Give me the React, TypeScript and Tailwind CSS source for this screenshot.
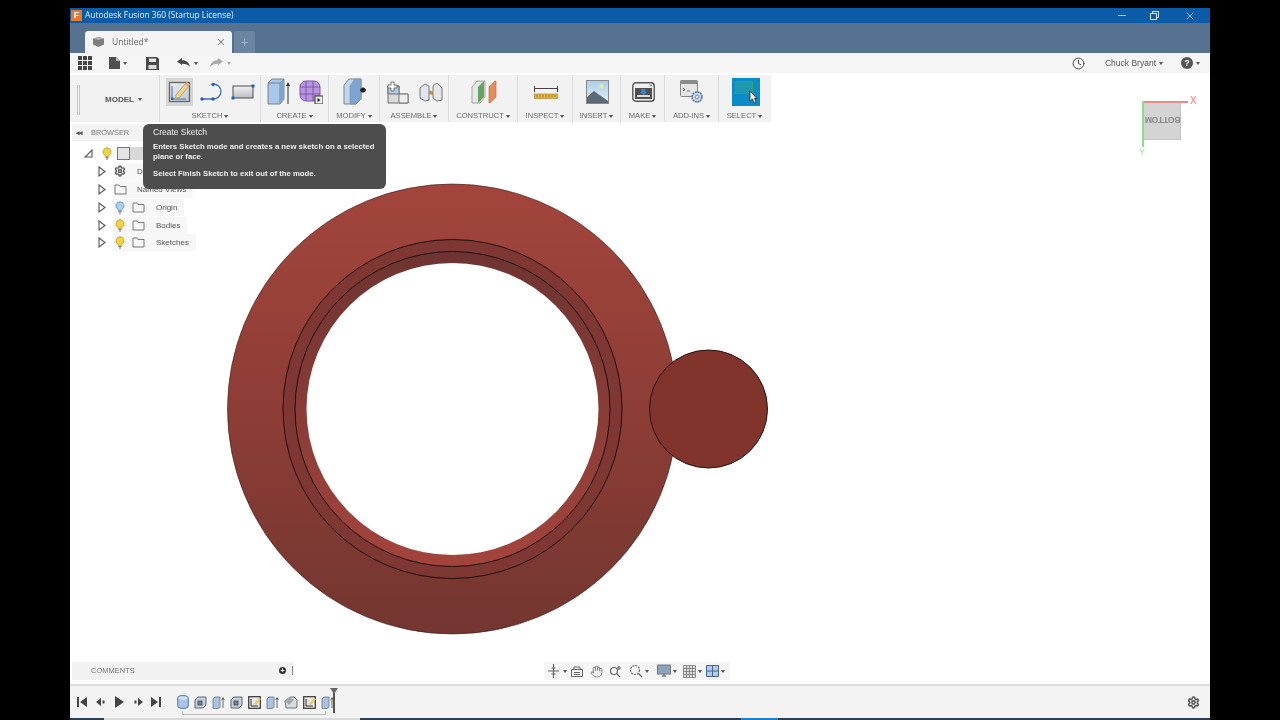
import { Clock, Hand, Settings, X } from "lucide-react";
import type { ReactNode } from "react";

const sans = "font-['Liberation_Sans',Arial,sans-serif]";

function Caret({ className = "" }: { className?: string }) {
  return <span className={`inline-block h-0 w-0 border-x-[2.5px] border-t-[3px] border-x-transparent border-t-[#555] ${className}`} />;
}

function Bulb({ color = "#f5d33f", rim = "#b89a20" }: { color?: string; rim?: string }) {
  return (
    <svg width="10" height="13" viewBox="0 0 10 13">
      <path d="M5 .8a4 4 0 0 0-2.400 7.200c.5.4.7 1 .8 1.600h3.200c.1-.6.3-1.200.8-1.600A4 4 0 0 0 5 .8z" fill={color} stroke={rim} strokeWidth=".8" />
      <path d="M3.500 10.600h3M4 12h2" stroke="#777" strokeWidth="1" />
    </svg>
  );
}

function Folder() {
  return (
    <svg width="13" height="11" viewBox="0 0 13 11" fill="#f7f7f7" stroke="#777" strokeWidth="1">
      <path d="M1 2.500V10h11V2.500H6L5 1H1z" />
    </svg>
  );
}

function Tri() {
  return (
    <svg width="8" height="11" viewBox="0 0 8 11">
      <path d="M1 1l6 4.500L1 10z" fill="#fff" stroke="#555" strokeWidth="1.100" />
    </svg>
  );
}

function SketchIcon() {
  return (
    <svg width="24" height="24" viewBox="0 0 24 24">
      <defs>
        <linearGradient id="sk" x1="0" x2="1" y1="0" y2="1">
          <stop offset="0" stopColor="#eceef0" />
          <stop offset="1" stopColor="#bfc5cb" />
        </linearGradient>
      </defs>
      <rect x="1.500" y="2.500" width="20" height="19" fill="url(#sk)" stroke="#62666b" strokeWidth="1.300" />
      <path d="M4 6v13h14" fill="none" stroke="#3b6fb5" strokeWidth="1" />
      <rect x="3" y="17.500" width="2.500" height="2.500" fill="#2a62b8" />
      <path d="M8 15l9-11 3.500 2.500-9 11-4 1z" fill="#ecd48a" stroke="#a8955a" strokeWidth=".7" />
      <path d="M17 4l1.500-2 3.500 2.500-1.500 2z" fill="#e3a788" />
    </svg>
  );
}

function SplineIcon() {
  return (
    <svg width="24" height="20" viewBox="0 0 24 20">
      <path d="M2 17h11c4 0 8-3 8-7.500S17 2 13 2" fill="none" stroke="#3c6db0" strokeWidth="1.300" />
      <g fill="#1f5fbf">
        <circle cx="2" cy="17" r="1.700" />
        <circle cx="13" cy="17" r="1.700" />
        <circle cx="13" cy="2.500" r="1.700" />
      </g>
    </svg>
  );
}

function RectIcon() {
  return (
    <svg width="24" height="16" viewBox="0 0 24 16">
      <defs>
        <linearGradient id="rg" x1="0" x2="0" y1="0" y2="1">
          <stop offset="0" stopColor="#f2f2f2" />
          <stop offset="1" stopColor="#bbbcbe" />
        </linearGradient>
      </defs>
      <rect x="2" y="2" width="20" height="12" fill="url(#rg)" stroke="#4a4d52" strokeWidth="1" />
      <rect x=".5" y="12.500" width="3" height="3" fill="#1f5fbf" />
      <rect x="20.500" y=".5" width="3" height="3" fill="#1f5fbf" />
    </svg>
  );
}

function ExtrudeIcon() {
  return (
    <svg width="24" height="27" viewBox="0 0 24 27">
      <path d="M1 5l4-4h12v20l-4 5H1z" fill="#a9c8e8" stroke="#6d7a88" strokeWidth=".9" />
      <path d="M13 5h-12M13 5l4-4M13 5v21" fill="none" stroke="#6d7a88" strokeWidth=".9" />
      <path d="M13 5l4-4v20l-4 5z" fill="#7fa3cc" />
      <path d="M21 26V6" stroke="#333" strokeWidth="1" />
      <path d="M19 8l2-4 2 4z" fill="#333" />
    </svg>
  );
}

function FormIcon() {
  return (
    <svg width="24" height="24" viewBox="0 0 24 24">
      <rect x="1" y="1" width="20" height="20" rx="6" fill="#b994dd" stroke="#7b5aa8" />
      <path d="M7 1v20M14 1v20M1 7h20M1 14h20" stroke="#6f4aa4" strokeWidth=".8" />
      <rect x="16" y="16" width="8" height="8" fill="#eee" stroke="#333" />
      <path d="M18.500 18v4l3-2z" fill="#222" />
    </svg>
  );
}

function ModifyIcon() {
  return (
    <svg width="24" height="27" viewBox="0 0 24 27">
      <path d="M1 7l5-6h12v20l-5 5H1z" fill="#c1d6ee" stroke="#7a8794" />
      <path d="M7 8l5-7h6v20l-5 5H7z" fill="#7ea4d2" stroke="#7a8794" strokeWidth=".6" />
      <path d="M17 12h6" stroke="#222" strokeWidth="1.300" />
      <circle cx="20" cy="12" r="2.600" fill="#222" />
    </svg>
  );
}

function AssembleAIcon() {
  return (
    <svg width="24" height="24" viewBox="0 0 24 24">
      <path d="M2 6h11v8h9v9H2z" fill="#d9d9d9" stroke="#6f6f6f" />
      <path d="M2 6h11v8H2z" fill="#b3cbe6" stroke="#6f6f6f" />
      <path d="M5 2h3v3h3v3H8v3H5V8H2V5h3z" fill="#fff" stroke="#555" strokeWidth=".8" />
      <path d="M13 14h9v9h-9z" fill="#ececec" stroke="#777" />
    </svg>
  );
}

function AssembleBIcon() {
  return (
    <svg width="24" height="20" viewBox="0 0 24 20">
      <path d="M1 16V6l5-4 4 2v14l-4 1z" fill="#dfe6ef" stroke="#777" />
      <path d="M14 4l4-3 5 5v12l-5 1-4-3z" fill="#e6e6e6" stroke="#777" />
      <path d="M10 8l4 2v3l-4-1z" fill="#b58f52" />
    </svg>
  );
}

function ConstructIcon() {
  return (
    <svg width="26" height="24" viewBox="0 0 26 24">
      <path d="M1 7l5-6h8v16l-5 6H1z" fill="#e8e8e8" stroke="#888" strokeWidth=".7" />
      <path d="M7 7l6-6v16l-6 6z" fill="#63a45f" />
      <path d="M18 7l6-6h1v16l-6 6h-1z" fill="#e98b55" stroke="#b76a3d" strokeWidth=".6" />
    </svg>
  );
}

function InspectIcon() {
  return (
    <svg width="24" height="14" viewBox="0 0 24 14">
      <path d="M.5 1v6M23.500 1v6M1 3.500h22" stroke="#444" strokeWidth="1" />
      <rect x=".5" y="9" width="23" height="4.500" fill="#e6b13e" stroke="#9a7a2b" strokeWidth=".6" />
      <path d="M3 10v2M6 10v2M9 10v2M12 10v2M15 10v2M18 10v2M21 10v2" stroke="#8b6b1e" strokeWidth=".7" />
    </svg>
  );
}

function InsertIcon() {
  return (
    <svg width="23" height="24" viewBox="0 0 23 24">
      <defs>
        <linearGradient id="sky" x1="0" x2="0" y1="0" y2="1">
          <stop offset="0" stopColor="#a9cfe6" />
          <stop offset="1" stopColor="#e6eef2" />
        </linearGradient>
      </defs>
      <rect x=".5" y=".5" width="22" height="23" fill="url(#sky)" stroke="#888" />
      <circle cx="15.500" cy="6" r="2" fill="#f3e6a5" />
      <path d="M1 23V17l7-6 4 3 3 2 7 5v2z" fill="#5c6a78" />
    </svg>
  );
}

function MakeIcon() {
  return (
    <svg width="23" height="20" viewBox="0 0 23 20">
      <rect x=".8" y=".8" width="21.400" height="18.400" rx="3" fill="#f0f0f0" stroke="#555" strokeWidth="1.400" />
      <rect x="3" y="6" width="17" height="11" fill="#4f4f4f" />
      <rect x="5" y="13" width="13" height="2" fill="#ddd" />
      <path d="M9.500 7h4v3h2l-4 3-4-3h2z" fill="#3a86c8" />
      <circle cx="19" cy="3.500" r=".9" fill="#3aa655" />
    </svg>
  );
}

function AddinsIcon() {
  return (
    <svg width="24" height="24" viewBox="0 0 24 24">
      <rect x=".5" y=".5" width="17" height="16" rx="1" fill="#e4e4e4" stroke="#888" />
      <rect x=".5" y=".5" width="17" height="3.500" fill="#8b8b8b" />
      <path d="M3 8l2 1.500L3 11M7 11h3" fill="none" stroke="#555" strokeWidth=".8" />
      <circle cx="17" cy="17" r="5" fill="#c4d6ee" stroke="#4f6f9f" strokeWidth="1.400" strokeDasharray="2 .6" />
      <circle cx="17" cy="17" r="1.800" fill="#fff" stroke="#4f6f9f" strokeWidth=".7" />
    </svg>
  );
}

function SelectIcon() {
  return (
    <div className="relative ml-[1px] h-[28px] w-[28px] bg-[#0a8bca]">
      <div className="ml-[3px] mt-[3px] h-[13px] w-[18px] border border-[#35a35c] bg-[#1f97b0]" />
      <svg width="9" height="14" viewBox="0 0 9 14" className="absolute bottom-[2px] right-[2px]">
        <path d="M1 1v10l2.500-2 1.500 4 2-1-1.500-3.500H8z" fill="#fff" stroke="#222" strokeWidth=".8" />
      </svg>
    </div>
  );
}

function Group({ label, width, children, last }: { label: string; width: number; children: ReactNode; last?: boolean }) {
  return (
    <div
      className={`flex h-full flex-col items-center border-[#dcdcdc] ${last ? "" : "border-r"}`}
      style={{ width }}
    >
      <div className="flex h-[33px] items-center justify-center pl-[1px]">{children}</div>
      <div className={`${sans} mt-[3px] flex items-center gap-[2px] text-[7.600px] leading-[10px] text-[#6a6a6a]`}>
        {label}
        <Caret />
      </div>
    </div>
  );
}

function BrowserRow({ bulb, icon, label }: { bulb?: ReactNode; icon: ReactNode; label: string }) {
  return (
    <div className="flex h-[18px] items-center pl-[26px]">
      <Tri />
      <div className="ml-[7px] flex h-[17px] items-center bg-[#f7f7f7] pr-[7px]">
        {bulb && <div className="flex w-[14px] justify-center">{bulb}</div>}
        <div className={`flex w-[14px] justify-center ${bulb ? "ml-[4px]" : ""}`}>{icon}</div>
        <span className={`${sans} whitespace-nowrap pt-[1px] text-[8px] text-[#555] ${bulb ? "ml-[11px]" : "ml-[10px]"}`}>{label}</span>
      </div>
    </div>
  );
}

function Feature({ kind }: { kind: string }) {
  if (kind === "sketch") {
    return (
      <svg width="13" height="13" viewBox="0 0 13 13">
        <rect x=".7" y=".7" width="11.600" height="11.600" fill="#e8e8e8" stroke="#333" strokeWidth="1.200" />
        <path d="M3 3v7h7" fill="none" stroke="#333" />
        <path d="M6 8l5-6 2 1-5 6z" fill="#edc84a" />
      </svg>
    );
  }
  if (kind === "ext") {
    return (
      <svg width="13" height="13" viewBox="0 0 13 13">
        <path d="M1 3l2-2h5v10l-2 1.500H1z" fill="#a9c4e2" stroke="#69727d" strokeWidth=".8" />
        <path d="M11 12V3M9.800 4L11 1.500 12.200 4" fill="none" stroke="#444" strokeWidth=".8" />
      </svg>
    );
  }
  if (kind === "hole") {
    return (
      <svg width="13" height="13" viewBox="0 0 13 13">
        <path d="M1 4l3-3h8v8l-3 3H1z" fill="#c6cfd9" stroke="#5f6872" />
        <rect x="4" y="5" width="4" height="4" fill="#6d89aa" stroke="#333" strokeWidth=".7" />
      </svg>
    );
  }
  if (kind === "chamfer") {
    return (
      <svg width="14" height="13" viewBox="0 0 14 13">
        <path d="M1 5l5-4h4l3 3v7l-1 1H2z" fill="#d8dde3" stroke="#6b7178" />
        <path d="M1 5l5-4 4 3-5 5z" fill="#a4a8ad" />
      </svg>
    );
  }
  return (
    <svg width="12" height="14" viewBox="0 0 12 14">
      <rect x=".7" y=".7" width="10.600" height="12.600" rx="3" fill="#a8c5e8" stroke="#4f76ad" />
      <ellipse cx="6" cy="3" rx="4.500" ry="1.800" fill="#cfe0f3" />
    </svg>
  );
}

function TimelineControl({ d }: { d: string }) {
  return (
    <svg width="12" height="12" viewBox="0 0 12 12" fill="#444">
      <path d={d} />
    </svg>
  );
}

export default function App() {
  return (
    <div className="relative h-[720px] w-[1280px] overflow-hidden bg-black pt-[8px] blur-[0.35px]">
      <div className={`${sans} ml-[70px] flex h-[710px] w-[1140px] flex-col bg-white`}>
        {/* title bar */}
        <div className="flex h-[15px] items-center bg-[#0a5ca8]">
          <div className="ml-[1px] flex h-[11px] w-[11px] items-center justify-center bg-[#e8792c] text-[9px] font-bold leading-none text-white">F</div>
          <span className="ml-[3px] font-['Open_Sans',sans-serif] text-[8.400px] leading-none text-[#e8f0f8]">Autodesk Fusion 360 (Startup License)</span>
          <div className="ml-auto mr-[14px] flex items-center gap-[24px] text-[#cfe0f0]">
            <div className="h-px w-[8px] bg-[#a9c8e6]" />
            <svg width="9" height="9" viewBox="0 0 9 9" fill="none" stroke="#dbe8f4" strokeWidth="1">
              <path d="M.5 2.500h6v6h-6zM2.500 2.500v-2h6v6h-2" />
            </svg>
            <X size={12} strokeWidth={1.400} className="ml-[1px]" />
          </div>
        </div>

        {/* tab bar */}
        <div className="flex h-[30px] items-end bg-[#567290] pl-[15px]">
          <div className="flex h-[22px] w-[147px] items-center rounded-t-[3px] bg-[#f4f4f4] pl-[7px] pr-[6px]">
            <svg width="13" height="12" viewBox="0 0 13 12">
              <path d="M1 2.500L6.500 1 12 2.500v6L6.500 11 1 8.500z" fill="#7f7f7f" />
              <path d="M6.500 4L1 2.500 6.500 1 12 2.500z" fill="#b0b0b0" />
            </svg>
            <span className="ml-[7px] font-['Open_Sans',sans-serif] text-[8.500px] text-[#666]">Untitled*</span>
            <X size={10} strokeWidth={2.500} className="ml-auto text-[#7a7a7a]" />
          </div>
          <div className="ml-[2px] flex h-[22px] w-[21px] items-center justify-center rounded-t-[2px] bg-[#6a84a1] text-[14px] leading-none text-[#9db1c6]">+</div>
        </div>

        {/* quick access */}
        <div className="flex h-[20px] items-center bg-[#f5f5f5] pl-[8px] pr-[10px]">
          <svg width="14" height="14" viewBox="0 0 14 14" fill="#454545">
            <path d="M0 0h4v4H0zM5 0h4v4H5zM10 0h4v4h-4zM0 5h4v4H0zM5 5h4v4H5zM10 5h4v4h-4zM0 10h4v4H0zM5 10h4v4H5zM10 10h4v4h-4z" />
          </svg>
          <svg width="11" height="12" viewBox="0 0 11 12" fill="#4f4f4f" className="ml-[17px]">
            <path d="M0 0h7l4 4v8H0z" />
            <path d="M7 0v4h4z" fill="#bdbdbd" />
          </svg>
          <Caret className="ml-[3px]" />
          <svg width="13" height="13" viewBox="0 0 13 13" className="ml-[19px]">
            <path d="M0 0h11l2 2v11H0z" fill="#4a4a4a" />
            <path d="M3 1.500h7v3.500H3z" fill="#e8e8e8" />
            <path d="M2.500 8h8v4h-8z" fill="#dcdcdc" />
          </svg>
          <svg width="13" height="10" viewBox="0 0 13 10" fill="#454545" className="ml-[18px]">
            <path d="M0 3.500L5 0v2.300c4 0 7 1.700 8 6.700-1.600-2.500-4-3.300-8-3.300V7z" />
          </svg>
          <Caret className="ml-[4px]" />
          <svg width="13" height="10" viewBox="0 0 13 10" fill="#a9a9a9" className="ml-[12px]">
            <path d="M13 3.500L8 0v2.300C4 2.300 1 4 0 9c1.600-2.500 4-3.300 8-3.300V7z" />
          </svg>
          <Caret className="ml-[4px] opacity-50" />
          <Clock size={13} strokeWidth={1.800} className="ml-auto text-[#444]" />
          <span className="ml-[20px] text-[8.500px] text-[#555]">Chuck Bryant</span>
          <Caret className="ml-[3px]" />
          <div className="ml-[18px] flex h-[12px] w-[12px] items-center justify-center rounded-full bg-[#555] text-[9px] font-bold leading-none text-white">?</div>
          <Caret className="ml-[3px]" />
        </div>

        {/* canvas */}
        <div className="relative flex flex-1 flex-col pt-[2px]">
          <svg className="absolute left-0 top-0" width="1140" height="611" viewBox="0 0 1140 611">
            <defs>
              <linearGradient id="outer" x1="0" x2="0" y1="0" y2="1">
                <stop offset="0" stopColor="#a2453c" />
                <stop offset="0.5" stopColor="#8d3d36" />
                <stop offset="1" stopColor="#733630" />
              </linearGradient>
              <linearGradient id="inner" x1="0" x2="0" y1="0" y2="1">
                <stop offset="0" stopColor="#6e3431" />
                <stop offset="1" stopColor="#a3443c" />
              </linearGradient>
            </defs>
            <circle cx="382.500" cy="336" r="225" fill="url(#outer)" stroke="#3a1a18" strokeWidth=".6" />
            <circle cx="382.500" cy="336" r="169.500" fill="#7f3733" stroke="#200c0c" strokeWidth="1" />
            <circle cx="382.500" cy="336" r="157.500" fill="url(#inner)" stroke="#200c0c" strokeWidth="1" />
            <circle cx="382.500" cy="336" r="146" fill="#fff" />
            <circle cx="638.500" cy="336" r="59" fill="#80342c" stroke="#2a1210" strokeWidth="1" />
          </svg>

          {/* toolbar */}
          <div className="relative flex h-[47px] w-[701px] bg-[#f2f2f2]">
            <div className="flex h-full w-[90px] items-center border-r border-[#dcdcdc] pt-[2px]">
              <div className="ml-[7px] h-[30px] w-[3px] border-x border-[#c8c8c8]" />
              <span className="ml-[25px] text-[8px] font-bold text-[#555]">MODEL</span>
              <Caret className="ml-[4px]" />
            </div>
            <Group label="SKETCH" width={101}>
              <div className="flex items-center gap-[7px]">
                <div className="flex h-[28px] w-[27px] items-center justify-center bg-[#d6d6d6]"><SketchIcon /></div>
                <SplineIcon />
                <RectIcon />
              </div>
            </Group>
            <Group label="CREATE" width={68}>
              <div className="flex items-center gap-[8px]">
                <ExtrudeIcon />
                <FormIcon />
              </div>
            </Group>
            <Group label="MODIFY" width={51}><ModifyIcon /></Group>
            <Group label="ASSEMBLE" width={69}>
              <div className="flex items-center gap-[9px]">
                <AssembleAIcon />
                <AssembleBIcon />
              </div>
            </Group>
            <Group label="CONSTRUCT" width={69}><ConstructIcon /></Group>
            <Group label="INSPECT" width={55}><InspectIcon /></Group>
            <Group label="INSERT" width={48}><InsertIcon /></Group>
            <Group label="MAKE" width={44}><MakeIcon /></Group>
            <Group label="ADD-INS" width={54}><AddinsIcon /></Group>
            <Group label="SELECT" width={51} last><SelectIcon /></Group>
          </div>

          {/* browser */}
          <div className="relative ml-[2px] mt-[2px] w-[200px]">
            <div className="flex h-[17px] w-[120px] items-center bg-[#f2f2f2] pl-[4px]">
              <span className="text-[7px] font-bold leading-none tracking-[-1px] text-[#555]">◂◂</span>
              <span className="ml-[9px] text-[7.400px] text-[#777]">BROWSER</span>
            </div>
            <div className="mt-[3px]">
              <div className="flex h-[18px] items-center pl-[12px]">
                <svg width="9" height="9" viewBox="0 0 9 9">
                  <path d="M8 1v7H1z" fill="#fff" stroke="#555" strokeWidth="1.100" />
                </svg>
                <div className="ml-[6px] flex w-[16px] justify-center"><Bulb /></div>
                <div className="ml-[2px] h-[13px] w-[13px] border border-[#777] bg-[#e4e4e4]" />
                <div className="h-[13px] w-[16px] bg-[#d8d8d8]" />
              </div>
              <BrowserRow icon={<Settings size={12} strokeWidth={2.800} className="text-[#555]" />} label="Document Settings" />
              <BrowserRow icon={<Folder />} label="Named Views" />
              <BrowserRow bulb={<Bulb color="#a9cff2" rim="#5a89b8" />} icon={<Folder />} label="Origin" />
              <BrowserRow bulb={<Bulb />} icon={<Folder />} label="Bodies" />
              <div className="-mt-[1px]">
                <BrowserRow bulb={<Bulb />} icon={<Folder />} label="Sketches" />
              </div>
            </div>
          </div>

          {/* comments and navigation */}
          <div className="relative mb-[4px] mt-auto flex h-[18px] pl-[2px]">
            <div className="flex w-[222px] items-center bg-[#f2f2f2] pb-[1px] pl-[19px]">
              <span className="text-[7.500px] text-[#777]">COMMENTS</span>
              <div className="ml-auto flex h-[7px] w-[7px] items-center justify-center rounded-full bg-[#333] text-[7px] font-bold leading-none text-white">+</div>
              <div className="ml-[6px] mr-[1px] h-[9px] w-px bg-[#888]" />
            </div>
            <div className="ml-[250px] flex w-[186px] items-center bg-[#f5f5f5] pl-[3px] text-[#555]">
              <svg width="13" height="14" viewBox="0 0 13 14" fill="none" stroke="#666" strokeWidth="1.200">
                <path d="M6.500 0v14M1 7h11M4.500 4h4M4.500 10h4" />
              </svg>
              <Caret className="ml-[3px]" />
              <svg width="12" height="11" viewBox="0 0 12 11" fill="none" stroke="#666" className="ml-[4px]">
                <path d="M.5 3.500h11v7H.5zM3 3.500V1h6v2.500M3 6.500h6M3 8.500h6" />
              </svg>
              <Hand size={13} strokeWidth={1.500} className="ml-[7px] text-[#666]" />
              <svg width="13" height="13" viewBox="0 0 13 13" fill="none" stroke="#666" strokeWidth="1.200" className="ml-[6px]">
                <circle cx="5" cy="6" r="3.500" />
                <path d="M8 9l3 3M10 1v4M8 3h4" />
              </svg>
              <svg width="14" height="14" viewBox="0 0 14 14" fill="none" stroke="#666" strokeWidth="1.200" className="ml-[7px]">
                <circle cx="6" cy="6" r="4.500" strokeDasharray="2 1" />
                <path d="M9.500 9.500l3.500 3.500" />
              </svg>
              <Caret className="ml-[2px]" />
              <svg width="14" height="14" viewBox="0 0 14 14" className="ml-[8px]">
                <rect x=".5" y="1" width="13" height="9" fill="#8ba3bf" stroke="#777" />
                <path d="M5 12h4M7 10v2" stroke="#777" strokeWidth="1.500" />
              </svg>
              <Caret className="ml-[2px]" />
              <svg width="13" height="13" viewBox="0 0 13 13" fill="#ddd" stroke="#777" strokeWidth=".8" className="ml-[6px]">
                <path d="M.5.5h12v12H.5zM.5 3.500h12M.5 6.500h12M.5 9.500h12M3.500.5v12M6.500.5v12M9.500.5v12" />
              </svg>
              <Caret className="ml-[2px]" />
              <svg width="13" height="12" viewBox="0 0 13 12" fill="#b4cbe8" stroke="#47668f" className="ml-[4px]">
                <path d="M.5.5h12v11H.5zM6.500.5v11M.5 6h12" />
              </svg>
              <Caret className="ml-[2px]" />
            </div>
          </div>
        </div>

        {/* timeline */}
        <div className="flex h-[34px] items-center border-t-2 border-[#dedede] bg-[#f3f3f3] pl-[6px] pr-[10px]">
          <div className="flex items-center gap-[6.500px]">
            <TimelineControl d="M1 1h2v10H1zM11 1v10L4 6z" />
            <TimelineControl d="M6 2v8L1 6zM7.500 4.500h2v3h-2z" />
            <TimelineControl d="M2 0l9 6-9 6z" />
            <TimelineControl d="M6 2v8l5-4zM2.500 4.500h2v3h-2z" />
            <TimelineControl d="M11 1H9v10h2zM1 1v10l7-5z" />
          </div>
          <div className="relative ml-[15px] flex items-center gap-[5px]">
            <Feature kind="body" />
            <Feature kind="hole" />
            <Feature kind="ext" />
            <Feature kind="hole" />
            <Feature kind="sketch" />
            <Feature kind="ext" />
            <Feature kind="chamfer" />
            <Feature kind="sketch" />
            <Feature kind="ext" />
            <div className="absolute bottom-[-6px] left-[5px] right-[8px] h-[4px] border-x border-b border-[#bbb]" />
            <div className="absolute left-[156px] top-[-6px] h-[24px] w-[2px] bg-[#555]" />
            <div className="absolute left-[153px] top-[-7px] h-0 w-0 border-x-[4px] border-t-[6px] border-x-transparent border-t-[#666]" />
          </div>
          <Settings size={13} strokeWidth={2.800} className="ml-auto text-[#555]" />
        </div>
      </div>

      {/* taskbar sliver */}
      <div className="ml-[70px] flex h-[2px] w-[1140px] bg-[#2b3f58]">
        <div className="ml-[34px] h-full w-[256px] bg-[#d9d9d9]" />
        <div className="ml-[381px] h-full w-[37px] bg-[#1d7fd0]" />
      </div>

      {/* tooltip, over the browser */}
      <div className={`${sans} absolute left-[143px] top-[124px] h-[65px] w-[243px] rounded-[6px] bg-[#4d4d4d] px-[10px] pt-[3px] text-[7.750px] font-bold leading-[9.500px] text-[#f0f0f0]`}>
        <div className="text-[8.500px] font-normal leading-[10px]">Create Sketch</div>
        <div className="mt-[5px]">Enters Sketch mode and creates a new sketch on a selected plane or face.</div>
        <div className="mt-[8px]">Select Finish Sketch to exit out of the mode.</div>
      </div>

      {/* view cube */}
      <div className={`${sans} absolute left-[1142px] top-[101px] h-[39px] w-[39px] border-b border-r border-[#c4c4c4] bg-[#d4d4d4]`}>
        <div className="absolute left-0 top-0 h-[2px] w-[46px] bg-[#e88a8a]" />
        <div className="absolute left-0 top-0 h-[46px] w-[2px] bg-[#8fdc8f]" />
        <span className="absolute left-[3px] top-[14px] rotate-180 text-[8.500px] font-bold leading-[10px] tracking-[-.2px] text-[#8a8a8a]">BOTTOM</span>
        <span className="absolute left-[48px] top-[-6px] text-[10px] font-bold leading-[12px] text-[#f0a0a0]">X</span>
        <span className="absolute left-[-3px] top-[46px] text-[9px] leading-[11px] text-[#98e098]">Y</span>
      </div>
    </div>
  );
}
